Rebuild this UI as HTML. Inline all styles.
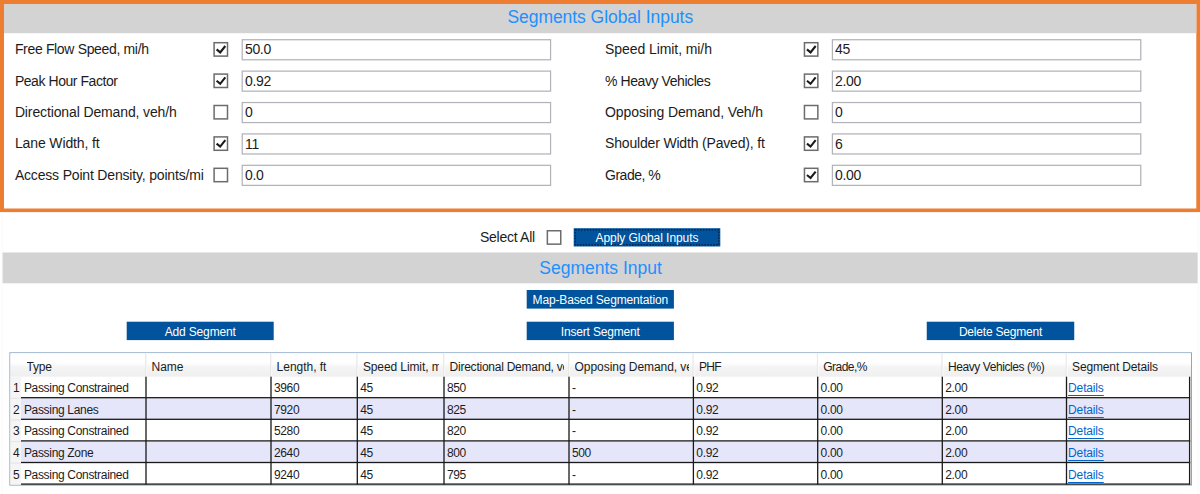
<!DOCTYPE html>
<html><head><meta charset="utf-8"><title>Segments</title>
<style>
html,body{margin:0;padding:0;background:#fff}
body{width:1200px;height:494px;position:relative;overflow:hidden;font-family:"Liberation Sans", sans-serif;}
svg.bg{position:absolute;left:0;top:0}
</style></head><body>
<svg class="bg" width="1200" height="494" viewBox="0 0 1200 494"><defs><linearGradient id="hg" x1="0" y1="0" x2="0" y2="1"><stop offset="0" stop-color="#fff"/><stop offset="0.4" stop-color="#fff"/><stop offset="0.6" stop-color="#f4f4f4"/><stop offset="1" stop-color="#efefef"/></linearGradient><linearGradient id="sg" x1="0" y1="0" x2="1" y2="0"><stop offset="0" stop-color="#e0e0e0"/><stop offset="1" stop-color="#ffffff"/></linearGradient></defs>
<rect x="0.00" y="0.00" width="1200.00" height="212.10" fill="#ED7D31" />
<rect x="4.00" y="4.00" width="1192.30" height="204.50" fill="#fff" />
<rect x="4.00" y="4.00" width="1192.30" height="29.20" fill="#D3D3D3" />
<rect x="214.10" y="42.70" width="13.40" height="13.40" fill="#fff" stroke="#6c6c6c" stroke-width="1.5" />
<polyline points="216.60,49.40 220.20,52.40 225.30,46.00" fill="none" stroke="#1a1a1a" stroke-width="2.1"/>
<rect x="242.22" y="39.73" width="308.35" height="20.05" fill="#fff" stroke="#B2B4BA" stroke-width="1.25" />
<rect x="214.10" y="74.10" width="13.40" height="13.40" fill="#fff" stroke="#6c6c6c" stroke-width="1.5" />
<polyline points="216.60,80.80 220.20,83.80 225.30,77.40" fill="none" stroke="#1a1a1a" stroke-width="2.1"/>
<rect x="242.22" y="71.12" width="308.35" height="20.05" fill="#fff" stroke="#B2B4BA" stroke-width="1.25" />
<rect x="214.10" y="105.50" width="13.40" height="13.40" fill="#fff" stroke="#6c6c6c" stroke-width="1.5" />
<rect x="242.22" y="102.53" width="308.35" height="20.05" fill="#fff" stroke="#B2B4BA" stroke-width="1.25" />
<rect x="214.10" y="136.90" width="13.40" height="13.40" fill="#fff" stroke="#6c6c6c" stroke-width="1.5" />
<polyline points="216.60,143.60 220.20,146.60 225.30,140.20" fill="none" stroke="#1a1a1a" stroke-width="2.1"/>
<rect x="242.22" y="133.92" width="308.35" height="20.05" fill="#fff" stroke="#B2B4BA" stroke-width="1.25" />
<rect x="214.10" y="168.30" width="13.40" height="13.40" fill="#fff" stroke="#6c6c6c" stroke-width="1.5" />
<rect x="242.22" y="165.32" width="308.35" height="20.05" fill="#fff" stroke="#B2B4BA" stroke-width="1.25" />
<rect x="804.45" y="42.70" width="13.40" height="13.40" fill="#fff" stroke="#6c6c6c" stroke-width="1.5" />
<polyline points="806.95,49.40 810.55,52.40 815.65,46.00" fill="none" stroke="#1a1a1a" stroke-width="2.1"/>
<rect x="832.42" y="39.73" width="308.35" height="20.05" fill="#fff" stroke="#B2B4BA" stroke-width="1.25" />
<rect x="804.45" y="74.10" width="13.40" height="13.40" fill="#fff" stroke="#6c6c6c" stroke-width="1.5" />
<polyline points="806.95,80.80 810.55,83.80 815.65,77.40" fill="none" stroke="#1a1a1a" stroke-width="2.1"/>
<rect x="832.42" y="71.12" width="308.35" height="20.05" fill="#fff" stroke="#B2B4BA" stroke-width="1.25" />
<rect x="804.45" y="105.50" width="13.40" height="13.40" fill="#fff" stroke="#6c6c6c" stroke-width="1.5" />
<rect x="832.42" y="102.53" width="308.35" height="20.05" fill="#fff" stroke="#B2B4BA" stroke-width="1.25" />
<rect x="804.45" y="136.90" width="13.40" height="13.40" fill="#fff" stroke="#6c6c6c" stroke-width="1.5" />
<polyline points="806.95,143.60 810.55,146.60 815.65,140.20" fill="none" stroke="#1a1a1a" stroke-width="2.1"/>
<rect x="832.42" y="133.92" width="308.35" height="20.05" fill="#fff" stroke="#B2B4BA" stroke-width="1.25" />
<rect x="804.45" y="168.30" width="13.40" height="13.40" fill="#fff" stroke="#6c6c6c" stroke-width="1.5" />
<polyline points="806.95,175.00 810.55,178.00 815.65,171.60" fill="none" stroke="#1a1a1a" stroke-width="2.1"/>
<rect x="832.42" y="165.32" width="308.35" height="20.05" fill="#fff" stroke="#B2B4BA" stroke-width="1.25" />
<rect x="547.35" y="230.75" width="13.40" height="13.40" fill="#fff" stroke="#6c6c6c" stroke-width="1.5" />
<rect x="573.70" y="228.20" width="146.60" height="18.30" fill="#00539C" />
<rect x="575.30" y="229.90" width="143.40" height="15.00" fill="none" stroke="#061a36" stroke-width="1.15" stroke-dasharray="1.45 1.45"/>
<rect x="2.00" y="252.50" width="1196.00" height="30.80" fill="#D3D3D3" />
<rect x="1.60" y="212.00" width="1.00" height="282.00" fill="#fafafa" />
<rect x="1197.60" y="212.00" width="1.00" height="282.00" fill="#fafafa" />
<rect x="526.70" y="290.00" width="147.20" height="18.60" fill="#00539C" />
<rect x="126.70" y="321.70" width="147.00" height="18.40" fill="#00539C" />
<rect x="526.70" y="321.70" width="147.20" height="18.40" fill="#00539C" />
<rect x="926.75" y="321.70" width="147.50" height="18.40" fill="#00539C" />
<rect x="9.90" y="352.80" width="1181.60" height="132.30" fill="#fff" stroke="#8AA7C4" stroke-width="1.0" />
<rect x="10.40" y="353.30" width="1180.60" height="23.40" fill="url(#hg)" />
<rect x="10.40" y="376.70" width="10.60" height="107.90" fill="#f5f5f6" />
<rect x="10.40" y="397.70" width="10.60" height="1.20" fill="#e6e6e8" />
<rect x="10.40" y="419.30" width="10.60" height="1.20" fill="#e6e6e8" />
<rect x="10.40" y="440.90" width="10.60" height="1.20" fill="#e6e6e8" />
<rect x="10.40" y="462.50" width="10.60" height="1.20" fill="#e6e6e8" />
<rect x="21.00" y="398.30" width="1168.60" height="21.60" fill="#E6E6FA" />
<rect x="21.00" y="441.50" width="1168.60" height="21.60" fill="#E6E6FA" />
<rect x="145.20" y="353.30" width="1.80" height="23.40" fill="url(#sg)" />
<rect x="270.20" y="353.30" width="1.80" height="23.40" fill="url(#sg)" />
<rect x="356.50" y="353.30" width="1.80" height="23.40" fill="url(#sg)" />
<rect x="443.20" y="353.30" width="1.80" height="23.40" fill="url(#sg)" />
<rect x="568.20" y="353.30" width="1.80" height="23.40" fill="url(#sg)" />
<rect x="692.60" y="353.30" width="1.80" height="23.40" fill="url(#sg)" />
<rect x="816.90" y="353.30" width="1.80" height="23.40" fill="url(#sg)" />
<rect x="941.50" y="353.30" width="1.80" height="23.40" fill="url(#sg)" />
<rect x="1065.70" y="353.30" width="1.80" height="23.40" fill="url(#sg)" />
<rect x="21.00" y="397.05" width="1169.20" height="1.30" fill="#1a1a1a" />
<rect x="21.00" y="418.65" width="1169.20" height="1.30" fill="#1a1a1a" />
<rect x="21.00" y="440.25" width="1169.20" height="1.30" fill="#1a1a1a" />
<rect x="21.00" y="461.85" width="1169.20" height="1.30" fill="#1a1a1a" />
<rect x="21.00" y="483.45" width="1169.20" height="1.30" fill="#1a1a1a" />
<rect x="145.35" y="376.70" width="1.30" height="107.90" fill="#1a1a1a" />
<rect x="270.35" y="376.70" width="1.30" height="107.90" fill="#1a1a1a" />
<rect x="356.65" y="376.70" width="1.30" height="107.90" fill="#1a1a1a" />
<rect x="443.35" y="376.70" width="1.30" height="107.90" fill="#1a1a1a" />
<rect x="568.35" y="376.70" width="1.30" height="107.90" fill="#1a1a1a" />
<rect x="692.75" y="376.70" width="1.30" height="107.90" fill="#1a1a1a" />
<rect x="817.05" y="376.70" width="1.30" height="107.90" fill="#1a1a1a" />
<rect x="941.65" y="376.70" width="1.30" height="107.90" fill="#1a1a1a" />
<rect x="1065.85" y="376.70" width="1.30" height="107.90" fill="#1a1a1a" />
<rect x="1188.95" y="376.70" width="1.30" height="107.90" fill="#1a1a1a" />
</svg>
<span style="position:absolute;left:507.40px;top:7.44px;font-size:17.5px;line-height:21.0px;color:#1E90FF;font-weight:400;white-space:nowrap;letter-spacing:-0.049px;">Segments Global Inputs</span>
<span style="position:absolute;left:14.90px;top:41.25px;font-size:14px;line-height:16.8px;color:#1c1c1c;font-weight:400;white-space:nowrap;letter-spacing:-0.338px;">Free Flow Speed, mi/h</span>
<span style="position:absolute;left:245.00px;top:41.35px;font-size:14px;line-height:16.8px;color:#1c1c1c;font-weight:400;white-space:nowrap;letter-spacing:-0.350px;">50.0</span>
<span style="position:absolute;left:14.90px;top:72.65px;font-size:14px;line-height:16.8px;color:#1c1c1c;font-weight:400;white-space:nowrap;letter-spacing:-0.445px;">Peak Hour Factor</span>
<span style="position:absolute;left:245.00px;top:72.75px;font-size:14px;line-height:16.8px;color:#1c1c1c;font-weight:400;white-space:nowrap;letter-spacing:-0.350px;">0.92</span>
<span style="position:absolute;left:14.90px;top:104.05px;font-size:14px;line-height:16.8px;color:#1c1c1c;font-weight:400;white-space:nowrap;letter-spacing:-0.127px;">Directional Demand, veh/h</span>
<span style="position:absolute;left:245.00px;top:104.15px;font-size:14px;line-height:16.8px;color:#1c1c1c;font-weight:400;white-space:nowrap;letter-spacing:-0.350px;">0</span>
<span style="position:absolute;left:14.90px;top:135.45px;font-size:14px;line-height:16.8px;color:#1c1c1c;font-weight:400;white-space:nowrap;letter-spacing:-0.121px;">Lane Width, ft</span>
<span style="position:absolute;left:245.00px;top:135.55px;font-size:14px;line-height:16.8px;color:#1c1c1c;font-weight:400;white-space:nowrap;letter-spacing:-0.350px;">11</span>
<span style="position:absolute;left:14.90px;top:166.85px;font-size:14px;line-height:16.8px;color:#1c1c1c;font-weight:400;white-space:nowrap;letter-spacing:-0.180px;">Access Point Density, points/mi</span>
<span style="position:absolute;left:245.00px;top:166.95px;font-size:14px;line-height:16.8px;color:#1c1c1c;font-weight:400;white-space:nowrap;letter-spacing:-0.350px;">0.0</span>
<span style="position:absolute;left:605.10px;top:41.25px;font-size:14px;line-height:16.8px;color:#1c1c1c;font-weight:400;white-space:nowrap;letter-spacing:-0.081px;">Speed Limit, mi/h</span>
<span style="position:absolute;left:835.00px;top:41.35px;font-size:14px;line-height:16.8px;color:#1c1c1c;font-weight:400;white-space:nowrap;letter-spacing:-0.350px;">45</span>
<span style="position:absolute;left:605.10px;top:72.65px;font-size:14px;line-height:16.8px;color:#1c1c1c;font-weight:400;white-space:nowrap;letter-spacing:-0.429px;">% Heavy Vehicles</span>
<span style="position:absolute;left:835.00px;top:72.75px;font-size:14px;line-height:16.8px;color:#1c1c1c;font-weight:400;white-space:nowrap;letter-spacing:-0.350px;">2.00</span>
<span style="position:absolute;left:605.10px;top:104.05px;font-size:14px;line-height:16.8px;color:#1c1c1c;font-weight:400;white-space:nowrap;letter-spacing:-0.111px;">Opposing Demand, Veh/h</span>
<span style="position:absolute;left:835.00px;top:104.15px;font-size:14px;line-height:16.8px;color:#1c1c1c;font-weight:400;white-space:nowrap;letter-spacing:-0.350px;">0</span>
<span style="position:absolute;left:605.10px;top:135.45px;font-size:14px;line-height:16.8px;color:#1c1c1c;font-weight:400;white-space:nowrap;letter-spacing:-0.180px;">Shoulder Width (Paved), ft</span>
<span style="position:absolute;left:835.00px;top:135.55px;font-size:14px;line-height:16.8px;color:#1c1c1c;font-weight:400;white-space:nowrap;letter-spacing:-0.350px;">6</span>
<span style="position:absolute;left:605.10px;top:166.85px;font-size:14px;line-height:16.8px;color:#1c1c1c;font-weight:400;white-space:nowrap;letter-spacing:-0.518px;">Grade, %</span>
<span style="position:absolute;left:835.00px;top:166.95px;font-size:14px;line-height:16.8px;color:#1c1c1c;font-weight:400;white-space:nowrap;letter-spacing:-0.350px;">0.00</span>
<span style="position:absolute;left:480.00px;top:228.95px;font-size:14px;line-height:16.8px;color:#1c1c1c;font-weight:400;white-space:nowrap;letter-spacing:-0.279px;">Select All</span>
<span style="position:absolute;left:573.70px;top:229.10px;width:146.60px;height:18.30px;line-height:18.30px;text-align:center;font-size:12px;color:#fff;white-space:nowrap;letter-spacing:-0.061px">Apply Global Inputs</span>
<span style="position:absolute;left:539.30px;top:257.64px;font-size:17.5px;line-height:21.0px;color:#1E90FF;font-weight:400;white-space:nowrap;letter-spacing:-0.006px;">Segments Input</span>
<span style="position:absolute;left:526.70px;top:290.90px;width:147.20px;height:18.60px;line-height:18.60px;text-align:center;font-size:12px;color:#fff;white-space:nowrap;letter-spacing:-0.148px">Map-Based Segmentation</span>
<span style="position:absolute;left:126.70px;top:322.60px;width:147.00px;height:18.40px;line-height:18.40px;text-align:center;font-size:12px;color:#fff;white-space:nowrap;letter-spacing:-0.147px">Add Segment</span>
<span style="position:absolute;left:526.70px;top:322.60px;width:147.20px;height:18.40px;line-height:18.40px;text-align:center;font-size:12px;color:#fff;white-space:nowrap;letter-spacing:-0.170px">Insert Segment</span>
<span style="position:absolute;left:926.75px;top:322.60px;width:147.50px;height:18.40px;line-height:18.40px;text-align:center;font-size:12px;color:#fff;white-space:nowrap;letter-spacing:-0.201px">Delete Segment</span>
<div style="position:absolute;left:26.60px;top:353.30px;width:114.80px;height:23.40px;overflow:hidden;white-space:nowrap;font-size:12px;line-height:28.60px;color:#1c1c1c;letter-spacing:-0.229px">Type</div>
<div style="position:absolute;left:151.60px;top:353.30px;width:114.80px;height:23.40px;overflow:hidden;white-space:nowrap;font-size:12px;line-height:28.60px;color:#1c1c1c;letter-spacing:-0.054px">Name</div>
<div style="position:absolute;left:276.60px;top:353.30px;width:76.10px;height:23.40px;overflow:hidden;white-space:nowrap;font-size:12px;line-height:28.60px;color:#1c1c1c;letter-spacing:-0.025px">Length, ft</div>
<div style="position:absolute;left:362.90px;top:353.30px;width:76.50px;height:23.40px;overflow:hidden;white-space:nowrap;font-size:12px;line-height:28.60px;color:#1c1c1c;letter-spacing:-0.100px">Speed Limit, mi/h</div>
<div style="position:absolute;left:449.60px;top:353.30px;width:114.80px;height:23.40px;overflow:hidden;white-space:nowrap;font-size:12px;line-height:28.60px;color:#1c1c1c;letter-spacing:-0.243px">Directional Demand, veh/h</div>
<div style="position:absolute;left:574.60px;top:353.30px;width:114.20px;height:23.40px;overflow:hidden;white-space:nowrap;font-size:12px;line-height:28.60px;color:#1c1c1c;letter-spacing:-0.057px">Opposing Demand, veh/h</div>
<div style="position:absolute;left:699.00px;top:353.30px;width:114.10px;height:23.40px;overflow:hidden;white-space:nowrap;font-size:12px;line-height:28.60px;color:#1c1c1c;letter-spacing:-0.733px">PHF</div>
<div style="position:absolute;left:823.30px;top:353.30px;width:114.40px;height:23.40px;overflow:hidden;white-space:nowrap;font-size:12px;line-height:28.60px;color:#1c1c1c;letter-spacing:-0.551px">Grade,%</div>
<div style="position:absolute;left:947.90px;top:353.30px;width:114.00px;height:23.40px;overflow:hidden;white-space:nowrap;font-size:12px;line-height:28.60px;color:#1c1c1c;letter-spacing:-0.419px">Heavy Vehicles (%)</div>
<div style="position:absolute;left:1072.10px;top:353.30px;width:112.90px;height:23.40px;overflow:hidden;white-space:nowrap;font-size:12px;line-height:28.60px;color:#1c1c1c;letter-spacing:-0.150px">Segment Details</div>
<span style="position:absolute;left:13.00px;top:381.24px;font-size:12px;line-height:14.4px;color:#1c1c1c;font-weight:400;white-space:nowrap;letter-spacing:0.000px;">1</span>
<span style="position:absolute;left:23.90px;top:381.24px;font-size:12px;line-height:14.4px;color:#1c1c1c;font-weight:400;white-space:nowrap;letter-spacing:-0.320px;">Passing Constrained</span>
<span style="position:absolute;left:273.90px;top:381.24px;font-size:12px;line-height:14.4px;color:#1c1c1c;font-weight:400;white-space:nowrap;letter-spacing:-0.330px;">3960</span>
<span style="position:absolute;left:360.20px;top:381.24px;font-size:12px;line-height:14.4px;color:#1c1c1c;font-weight:400;white-space:nowrap;letter-spacing:-0.330px;">45</span>
<span style="position:absolute;left:446.90px;top:381.24px;font-size:12px;line-height:14.4px;color:#1c1c1c;font-weight:400;white-space:nowrap;letter-spacing:-0.330px;">850</span>
<span style="position:absolute;left:571.90px;top:381.24px;font-size:12px;line-height:14.4px;color:#1c1c1c;font-weight:400;white-space:nowrap;letter-spacing:-0.330px;">-</span>
<span style="position:absolute;left:696.30px;top:381.24px;font-size:12px;line-height:14.4px;color:#1c1c1c;font-weight:400;white-space:nowrap;letter-spacing:-0.330px;">0.92</span>
<span style="position:absolute;left:820.60px;top:381.24px;font-size:12px;line-height:14.4px;color:#1c1c1c;font-weight:400;white-space:nowrap;letter-spacing:-0.330px;">0.00</span>
<span style="position:absolute;left:945.20px;top:381.24px;font-size:12px;line-height:14.4px;color:#1c1c1c;font-weight:400;white-space:nowrap;letter-spacing:-0.330px;">2.00</span>
<span style="position:absolute;left:1068.10px;top:381.24px;font-size:12px;line-height:14.4px;color:#0066CC;font-weight:400;white-space:nowrap;letter-spacing:-0.150px;text-decoration:underline;text-underline-offset:2.5px;">Details</span>
<span style="position:absolute;left:13.00px;top:402.84px;font-size:12px;line-height:14.4px;color:#1c1c1c;font-weight:400;white-space:nowrap;letter-spacing:0.000px;">2</span>
<span style="position:absolute;left:23.90px;top:402.84px;font-size:12px;line-height:14.4px;color:#1c1c1c;font-weight:400;white-space:nowrap;letter-spacing:-0.320px;">Passing Lanes</span>
<span style="position:absolute;left:273.90px;top:402.84px;font-size:12px;line-height:14.4px;color:#1c1c1c;font-weight:400;white-space:nowrap;letter-spacing:-0.330px;">7920</span>
<span style="position:absolute;left:360.20px;top:402.84px;font-size:12px;line-height:14.4px;color:#1c1c1c;font-weight:400;white-space:nowrap;letter-spacing:-0.330px;">45</span>
<span style="position:absolute;left:446.90px;top:402.84px;font-size:12px;line-height:14.4px;color:#1c1c1c;font-weight:400;white-space:nowrap;letter-spacing:-0.330px;">825</span>
<span style="position:absolute;left:571.90px;top:402.84px;font-size:12px;line-height:14.4px;color:#1c1c1c;font-weight:400;white-space:nowrap;letter-spacing:-0.330px;">-</span>
<span style="position:absolute;left:696.30px;top:402.84px;font-size:12px;line-height:14.4px;color:#1c1c1c;font-weight:400;white-space:nowrap;letter-spacing:-0.330px;">0.92</span>
<span style="position:absolute;left:820.60px;top:402.84px;font-size:12px;line-height:14.4px;color:#1c1c1c;font-weight:400;white-space:nowrap;letter-spacing:-0.330px;">0.00</span>
<span style="position:absolute;left:945.20px;top:402.84px;font-size:12px;line-height:14.4px;color:#1c1c1c;font-weight:400;white-space:nowrap;letter-spacing:-0.330px;">2.00</span>
<span style="position:absolute;left:1068.10px;top:402.84px;font-size:12px;line-height:14.4px;color:#0066CC;font-weight:400;white-space:nowrap;letter-spacing:-0.150px;text-decoration:underline;text-underline-offset:2.5px;">Details</span>
<span style="position:absolute;left:13.00px;top:424.44px;font-size:12px;line-height:14.4px;color:#1c1c1c;font-weight:400;white-space:nowrap;letter-spacing:0.000px;">3</span>
<span style="position:absolute;left:23.90px;top:424.44px;font-size:12px;line-height:14.4px;color:#1c1c1c;font-weight:400;white-space:nowrap;letter-spacing:-0.320px;">Passing Constrained</span>
<span style="position:absolute;left:273.90px;top:424.44px;font-size:12px;line-height:14.4px;color:#1c1c1c;font-weight:400;white-space:nowrap;letter-spacing:-0.330px;">5280</span>
<span style="position:absolute;left:360.20px;top:424.44px;font-size:12px;line-height:14.4px;color:#1c1c1c;font-weight:400;white-space:nowrap;letter-spacing:-0.330px;">45</span>
<span style="position:absolute;left:446.90px;top:424.44px;font-size:12px;line-height:14.4px;color:#1c1c1c;font-weight:400;white-space:nowrap;letter-spacing:-0.330px;">820</span>
<span style="position:absolute;left:571.90px;top:424.44px;font-size:12px;line-height:14.4px;color:#1c1c1c;font-weight:400;white-space:nowrap;letter-spacing:-0.330px;">-</span>
<span style="position:absolute;left:696.30px;top:424.44px;font-size:12px;line-height:14.4px;color:#1c1c1c;font-weight:400;white-space:nowrap;letter-spacing:-0.330px;">0.92</span>
<span style="position:absolute;left:820.60px;top:424.44px;font-size:12px;line-height:14.4px;color:#1c1c1c;font-weight:400;white-space:nowrap;letter-spacing:-0.330px;">0.00</span>
<span style="position:absolute;left:945.20px;top:424.44px;font-size:12px;line-height:14.4px;color:#1c1c1c;font-weight:400;white-space:nowrap;letter-spacing:-0.330px;">2.00</span>
<span style="position:absolute;left:1068.10px;top:424.44px;font-size:12px;line-height:14.4px;color:#0066CC;font-weight:400;white-space:nowrap;letter-spacing:-0.150px;text-decoration:underline;text-underline-offset:2.5px;">Details</span>
<span style="position:absolute;left:13.00px;top:446.04px;font-size:12px;line-height:14.4px;color:#1c1c1c;font-weight:400;white-space:nowrap;letter-spacing:0.000px;">4</span>
<span style="position:absolute;left:23.90px;top:446.04px;font-size:12px;line-height:14.4px;color:#1c1c1c;font-weight:400;white-space:nowrap;letter-spacing:-0.320px;">Passing Zone</span>
<span style="position:absolute;left:273.90px;top:446.04px;font-size:12px;line-height:14.4px;color:#1c1c1c;font-weight:400;white-space:nowrap;letter-spacing:-0.330px;">2640</span>
<span style="position:absolute;left:360.20px;top:446.04px;font-size:12px;line-height:14.4px;color:#1c1c1c;font-weight:400;white-space:nowrap;letter-spacing:-0.330px;">45</span>
<span style="position:absolute;left:446.90px;top:446.04px;font-size:12px;line-height:14.4px;color:#1c1c1c;font-weight:400;white-space:nowrap;letter-spacing:-0.330px;">800</span>
<span style="position:absolute;left:571.90px;top:446.04px;font-size:12px;line-height:14.4px;color:#1c1c1c;font-weight:400;white-space:nowrap;letter-spacing:-0.330px;">500</span>
<span style="position:absolute;left:696.30px;top:446.04px;font-size:12px;line-height:14.4px;color:#1c1c1c;font-weight:400;white-space:nowrap;letter-spacing:-0.330px;">0.92</span>
<span style="position:absolute;left:820.60px;top:446.04px;font-size:12px;line-height:14.4px;color:#1c1c1c;font-weight:400;white-space:nowrap;letter-spacing:-0.330px;">0.00</span>
<span style="position:absolute;left:945.20px;top:446.04px;font-size:12px;line-height:14.4px;color:#1c1c1c;font-weight:400;white-space:nowrap;letter-spacing:-0.330px;">2.00</span>
<span style="position:absolute;left:1068.10px;top:446.04px;font-size:12px;line-height:14.4px;color:#0066CC;font-weight:400;white-space:nowrap;letter-spacing:-0.150px;text-decoration:underline;text-underline-offset:2.5px;">Details</span>
<span style="position:absolute;left:13.00px;top:467.64px;font-size:12px;line-height:14.4px;color:#1c1c1c;font-weight:400;white-space:nowrap;letter-spacing:0.000px;">5</span>
<span style="position:absolute;left:23.90px;top:467.64px;font-size:12px;line-height:14.4px;color:#1c1c1c;font-weight:400;white-space:nowrap;letter-spacing:-0.320px;">Passing Constrained</span>
<span style="position:absolute;left:273.90px;top:467.64px;font-size:12px;line-height:14.4px;color:#1c1c1c;font-weight:400;white-space:nowrap;letter-spacing:-0.330px;">9240</span>
<span style="position:absolute;left:360.20px;top:467.64px;font-size:12px;line-height:14.4px;color:#1c1c1c;font-weight:400;white-space:nowrap;letter-spacing:-0.330px;">45</span>
<span style="position:absolute;left:446.90px;top:467.64px;font-size:12px;line-height:14.4px;color:#1c1c1c;font-weight:400;white-space:nowrap;letter-spacing:-0.330px;">795</span>
<span style="position:absolute;left:571.90px;top:467.64px;font-size:12px;line-height:14.4px;color:#1c1c1c;font-weight:400;white-space:nowrap;letter-spacing:-0.330px;">-</span>
<span style="position:absolute;left:696.30px;top:467.64px;font-size:12px;line-height:14.4px;color:#1c1c1c;font-weight:400;white-space:nowrap;letter-spacing:-0.330px;">0.92</span>
<span style="position:absolute;left:820.60px;top:467.64px;font-size:12px;line-height:14.4px;color:#1c1c1c;font-weight:400;white-space:nowrap;letter-spacing:-0.330px;">0.00</span>
<span style="position:absolute;left:945.20px;top:467.64px;font-size:12px;line-height:14.4px;color:#1c1c1c;font-weight:400;white-space:nowrap;letter-spacing:-0.330px;">2.00</span>
<span style="position:absolute;left:1068.10px;top:467.64px;font-size:12px;line-height:14.4px;color:#0066CC;font-weight:400;white-space:nowrap;letter-spacing:-0.150px;text-decoration:underline;text-underline-offset:2.5px;">Details</span>
</body></html>
